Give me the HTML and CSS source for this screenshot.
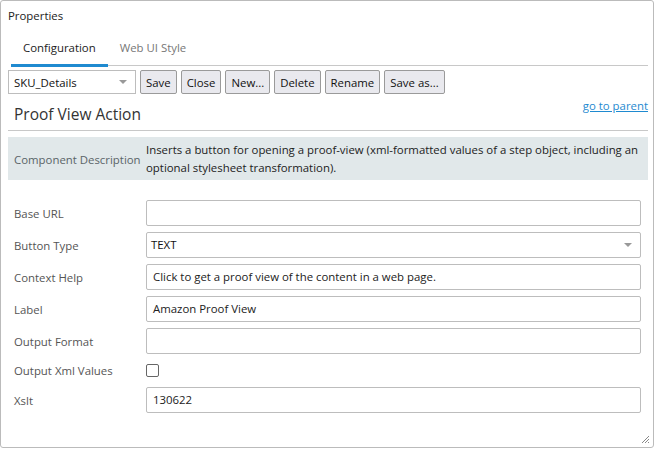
FILE: index.html
```html
<!DOCTYPE html>
<html lang="en">

<head>
    <meta charset="UTF-8" />
    <meta name="viewport" content="width=device-width, initial-scale=1.0" />
    <title>Properties</title>
    <link rel="stylesheet" href="styles.css">
</head>

<body>
    <div class="panel">
        <div class="panel-title">Properties</div>

        <div class="tabs">
            <div class="tab active">Configuration</div>
            <div class="tab">Web UI Style</div>
        </div>

        <div class="toolbar">
            <div class="select">
                <span>SKU_Details</span>
                <span class="caret"></span>
            </div>
            <button class="btn">Save</button>
            <button class="btn">Close</button>
            <button class="btn">New...</button>
            <button class="btn">Delete</button>
            <button class="btn">Rename</button>
            <button class="btn">Save as...</button>
        </div>

        <div class="section-head">
            <h2>Proof View Action</h2>
            <a href="#" class="parent-link">go to parent</a>
        </div>

        <div class="desc">
            <div class="desc-label">Component Description</div>
            <div class="desc-text">Inserts a button for opening a proof-view (xml-formatted values of a step object, including an optional stylesheet transformation).</div>
        </div>

        <div class="form">
            <label>Base URL</label>
            <div class="field"></div>

            <label>Button Type</label>
            <div class="field dropdown">
                <span class="type-value">TEXT</span>
                <span class="caret"></span>
            </div>

            <label>Context Help</label>
            <div class="field">Click to get a proof view of the content in a web page.</div>

            <label>Label</label>
            <div class="field">Amazon Proof View</div>

            <label>Output Format</label>
            <div class="field"></div>

            <label>Output Xml Values</label>
            <div class="check-wrap"><span class="checkbox"></span></div>

            <label>Xslt</label>
            <div class="field">130622</div>
        </div>

        <svg class="grip" width="10" height="10" viewBox="0 0 10 10">
            <path d="M9 2 L2 9 M9 5 L5 9 M9 8 L8 9" stroke="#888" stroke-width="1" fill="none" />
        </svg>
    </div>
</body>

</html>
```

FILE: styles.css
```css
body {
    margin: 0;
    padding: 0;
    font-family: 'Open Sans', 'Noto Sans', sans-serif;
    font-size: 11.4px;
    color: #222;
    background: #ffffff;
}

.panel {
    position: relative;
    box-sizing: border-box;
    width: 654px;
    height: 448px;
    border: 1px solid #bbbbbb;
    border-radius: 3px;
    padding: 0 5px 0 7px;
}

.panel-title {
    height: 30px;
    line-height: 30px;
    color: #222;
}

.tabs {
    display: flex;
    margin-left: 3px;
    border-bottom: 1px solid #c8c8c8;
}

.tab {
    padding: 0 12px;
    height: 33px;
    line-height: 33px;
    color: #777;
    border-bottom: 3px solid transparent;
    margin-bottom: -2px;
}

.tab.active {
    color: #222;
    border-bottom-color: #1f8ad0;
}

.toolbar {
    display: flex;
    align-items: center;
    gap: 4px;
    margin-top: 4px;
}

.select {
    box-sizing: border-box;
    width: 128px;
    height: 24px;
    border: 1px solid #bdbdbd;
    display: flex;
    align-items: center;
    justify-content: space-between;
    padding: 0 8px 0 5px;
    color: #111;
}

.caret {
    width: 0;
    height: 0;
    border-left: 4px solid transparent;
    border-right: 4px solid transparent;
    border-top: 4px solid #999;
}

.btn {
    font-family: inherit;
    font-size: 11.4px;
    height: 24px;
    padding: 0 5px;
    background: #e9e9ee;
    border: 1px solid #9a9a9a;
    border-radius: 2px;
    color: #111;
}

.section-head {
    display: flex;
    justify-content: space-between;
    align-items: flex-start;
    height: 36px;
    border-bottom: 1px solid #c8c8c8;
}

.section-head h2 {
    margin: 9px 0 0 6px;
    font-size: 15.5px;
    font-weight: normal;
    color: #333;
}

.parent-link {
    margin-top: 4px;
    color: #1f8ad0;
}

.desc {
    display: flex;
    align-items: center;
    margin-top: 6px;
    background: #e1e8ea;
    padding: 4px 0 3px;
}

.desc-label {
    width: 132px;
    flex-shrink: 0;
    padding-left: 6px;
    white-space: nowrap;
    color: #5a6468;
}

.desc-text {
    line-height: 18px;
    color: #222;
    padding-right: 8px;
}

.form {
    display: grid;
    grid-template-columns: 132px 1fr;
    align-items: center;
    row-gap: 6px;
    margin: 20px 7px 0 6px;
}

.form label {
    color: #555;
}

.field {
    box-sizing: border-box;
    height: 26px;
    border: 1px solid #bdbdbd;
    border-radius: 2px;
    padding: 0 6px;
    line-height: 24px;
    color: #222;
}

.dropdown {
    display: flex;
    align-items: center;
    justify-content: space-between;
    padding: 0 8px 0 4px;
}

.type-value {
    color: #111;
}

.check-wrap {
    height: 21px;
    display: flex;
    align-items: center;
}

.checkbox {
    box-sizing: border-box;
    width: 13px;
    height: 13px;
    border: 1px solid #666;
    border-radius: 2px;
}

.grip {
    position: absolute;
    right: 3px;
    bottom: 3px;
}
```
